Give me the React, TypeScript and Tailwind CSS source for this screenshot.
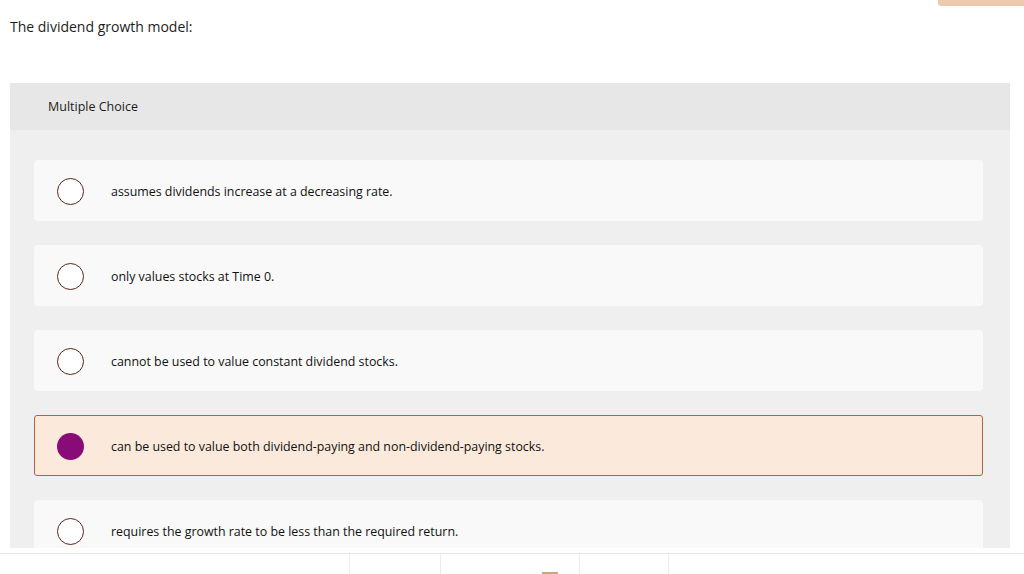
import React from 'react';

const options = [
  'assumes dividends increase at a decreasing rate.',
  'only values stocks at Time 0.',
  'cannot be used to value constant dividend stocks.',
  'can be used to value both dividend-paying and non-dividend-paying stocks.',
  'requires the growth rate to be less than the required return.',
];

const selected = 3;

export default function App() {
  return (
    <div className="relative h-[574px] w-[1024px] overflow-hidden bg-white font-['Open_Sans',sans-serif] text-[#222]">
      <div className="absolute right-0 top-0 h-[6px] w-[86px] rounded-bl-[3px] bg-[#edc9ae]" />
      <div className="flex h-[83px] flex-col pl-[10px] pt-[17px]">
        <h1 className="text-[14px] leading-[20px] text-[#1c1c1c]">The dividend growth model:</h1>
      </div>
      <div className="ml-[10px] h-[465px] w-[1000px] overflow-hidden bg-[#efefef]">
        <div className="flex h-[47px] items-center bg-[#e7e7e7] pl-[38px] pt-[2px] text-[12.5px] text-[#1c1c1c]">Multiple Choice</div>
        <div className="flex flex-col gap-[24px] pl-[24px] pr-[27px] pt-[30px]">
          {options.map((text, i) => (
            <OptionCard key={i} text={text} checked={i === selected} />
          ))}
        </div>
      </div>
      <div className="mt-[5px] flex h-[21px] border-t border-[#e6e6e6]">
        <div className="w-[349px]" />
        <div className="w-[91px] border-l border-[#ececec]" />
        <div className="relative w-[139px] border-l border-[#ececec]">
          <div className="absolute bottom-0 left-[101px] h-[2px] w-[16px] bg-[#c9a77f]" />
        </div>
        <div className="w-[90px] border-x border-[#ececec]" />
      </div>
    </div>
  );
}

function OptionCard({ text, checked }: { text: string; checked: boolean }) {
  return (
    <div
      className={
        checked
          ? 'flex h-[61px] shrink-0 items-center rounded-[3px] border border-[#b3643f] bg-[#fbeadb] pl-[22px]'
          : 'flex h-[61px] shrink-0 items-center rounded-[4px] border border-transparent bg-[#f9f9f9] pl-[22px]'
      }
    >
      {checked ? (
        <span className="mt-[1px] block h-[27px] w-[27px] shrink-0 rounded-full bg-[#890b78]" />
      ) : (
        <span className="mt-[1px] block h-[27px] w-[27px] shrink-0 rounded-full border-[1.5px] border-[#5a2418] bg-white" />
      )}
      <span className="ml-[27px] mt-[4px] text-[12.4px] text-[#111]">{text}</span>
    </div>
  );
}
